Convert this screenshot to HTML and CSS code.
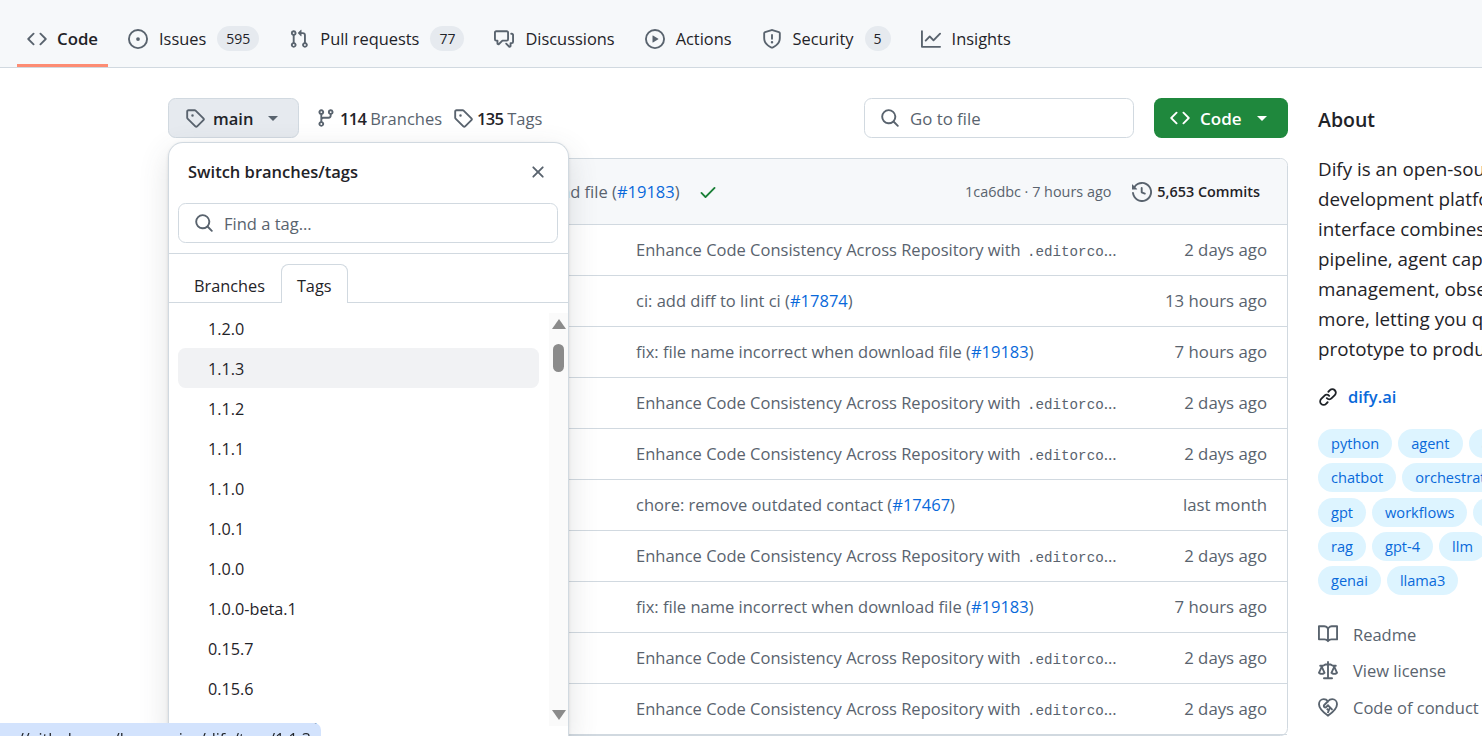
FILE: index.html
```html
<!DOCTYPE html>
<html lang="en">
<head>
  <meta charset="UTF-8">
  <title>dify</title>
  <link rel="stylesheet" href="styles.css">
</head>
<body>
  <nav class="repo-nav">
    <a class="tab active"><svg class="icon" viewBox="0 0 16 16"><path d="m11.28 3.22 4.25 4.25a.75.75 0 0 1 0 1.06l-4.25 4.25a.749.749 0 0 1-1.275-.326.749.749 0 0 1 .215-.734L13.94 8l-3.72-3.72a.749.749 0 0 1 .326-1.275.749.749 0 0 1 .734.215Zm-6.56 0a.751.751 0 0 1 1.042.018.751.751 0 0 1 .018 1.042L2.06 8l3.72 3.72a.749.749 0 0 1-.326 1.275.749.749 0 0 1-.734-.215L.47 8.53a.75.75 0 0 1 0-1.06Z"/></svg>Code</a>
    <a class="tab"><svg class="icon" viewBox="0 0 16 16"><path d="M8 9.5a1.5 1.5 0 1 0 0-3 1.5 1.5 0 0 0 0 3Z"/><path d="M8 0a8 8 0 1 1 0 16A8 8 0 0 1 8 0ZM1.5 8a6.5 6.5 0 1 0 13 0 6.5 6.5 0 0 0-13 0Z"/></svg>Issues<span class="badge">595</span></a>
    <a class="tab"><svg class="icon" viewBox="0 0 16 16"><path d="M1.5 3.25a2.25 2.25 0 1 1 3 2.122v5.256a2.251 2.251 0 1 1-1.5 0V5.372A2.25 2.25 0 0 1 1.5 3.25Zm5.677-.177L9.573.677A.25.25 0 0 1 10 .854V2.5h1A2.5 2.5 0 0 1 13.5 5v5.628a2.251 2.251 0 1 1-1.5 0V5a1 1 0 0 0-1-1h-1v1.646a.25.25 0 0 1-.427.177L7.177 3.427a.25.25 0 0 1 0-.354ZM3.75 2.5a.75.75 0 1 0 0 1.5.75.75 0 0 0 0-1.5Zm0 9.5a.75.75 0 1 0 0 1.5.75.75 0 0 0 0-1.5Zm8.25.75a.75.75 0 1 0 1.5 0 .75.75 0 0 0-1.5 0Z"/></svg>Pull requests<span class="badge">77</span></a>
    <a class="tab"><svg class="icon" viewBox="0 0 16 16"><path d="M1.75 1h8.5c.966 0 1.75.784 1.75 1.75v5.5A1.75 1.75 0 0 1 10.25 10H7.061l-2.574 2.573A1.458 1.458 0 0 1 2 11.543V10h-.25A1.75 1.75 0 0 1 0 8.25v-5.5C0 1.784.784 1 1.75 1ZM1.5 2.75v5.5c0 .138.112.25.25.25h1a.75.75 0 0 1 .75.75v2.19l2.72-2.72a.749.749 0 0 1 .53-.22h3.5a.25.25 0 0 0 .25-.25v-5.5a.25.25 0 0 0-.25-.25h-8.5a.25.25 0 0 0-.25.25Zm13 2a.25.25 0 0 0-.25-.25h-.5a.75.75 0 0 1 0-1.5h.5c.966 0 1.75.784 1.75 1.75v5.5A1.75 1.75 0 0 1 14.25 12H14v1.543a1.458 1.458 0 0 1-2.487 1.03L9.22 12.28a.749.749 0 0 1 .326-1.275.749.749 0 0 1 .734.215l2.22 2.22v-2.19a.75.75 0 0 1 .75-.75h1a.25.25 0 0 0 .25-.25Z"/></svg>Discussions</a>
    <a class="tab"><svg class="icon" viewBox="0 0 16 16"><path d="M8 0a8 8 0 1 1 0 16A8 8 0 0 1 8 0ZM1.5 8a6.5 6.5 0 1 0 13 0 6.5 6.5 0 0 0-13 0Zm4.879-2.773 4.264 2.559a.25.25 0 0 1 0 .428l-4.264 2.559A.25.25 0 0 1 6 10.559V5.442a.25.25 0 0 1 .379-.215Z"/></svg>Actions</a>
    <a class="tab"><svg class="icon" viewBox="0 0 16 16"><path d="M7.467.133a1.748 1.748 0 0 1 1.066 0l5.25 1.68A1.75 1.75 0 0 1 15 3.48V7c0 1.566-.32 3.182-1.303 4.682-.983 1.498-2.585 2.813-5.032 3.855a1.697 1.697 0 0 1-1.33 0c-2.447-1.042-4.049-2.357-5.032-3.855C1.32 10.182 1 8.566 1 7V3.48a1.75 1.75 0 0 1 1.217-1.667Zm.61 1.429a.25.25 0 0 0-.153 0l-5.25 1.68a.25.25 0 0 0-.174.238V7c0 1.358.275 2.666 1.057 3.86.784 1.194 2.121 2.34 4.366 3.297a.196.196 0 0 0 .154 0c2.245-.956 3.582-2.104 4.366-3.298C13.225 9.666 13.5 8.36 13.5 7V3.48a.251.251 0 0 0-.174-.237l-5.25-1.68ZM8.75 4.75v3a.75.75 0 0 1-1.5 0v-3a.75.75 0 0 1 1.5 0ZM9 10.5a1 1 0 1 1-2 0 1 1 0 0 1 2 0Z"/></svg>Security<span class="badge">5</span></a>
    <a class="tab"><svg class="icon" viewBox="0 0 16 16"><path d="M1.5 1.75V13.5h13.75a.75.75 0 0 1 0 1.5H.75a.75.75 0 0 1-.75-.75V1.75a.75.75 0 0 1 1.5 0Zm14.28 2.53-5.25 5.25a.75.75 0 0 1-1.06 0L7 7.06 4.28 9.78a.751.751 0 0 1-1.042-.018.751.751 0 0 1-.018-1.042l3.25-3.25a.75.75 0 0 1 1.06 0L10 7.94l4.72-4.72a.751.751 0 0 1 1.042.018.751.751 0 0 1 .018 1.042Z"/></svg>Insights</a>
  </nav>

  <main class="repo-main">
    <section class="files">
      <div class="toolbar">
        <div class="branch-select">
          <button class="btn-branch"><svg class="icon" viewBox="0 0 16 16"><path d="M1 7.775V2.75C1 1.784 1.784 1 2.75 1h5.025c.464 0 .91.184 1.238.513l6.25 6.25a1.75 1.75 0 0 1 0 2.474l-5.026 5.026a1.75 1.75 0 0 1-2.474 0l-6.25-6.25A1.75 1.75 0 0 1 1 7.775Zm1.5 0c0 .066.026.13.073.177l6.25 6.25a.25.25 0 0 0 .354 0l5.025-5.025a.25.25 0 0 0 0-.354l-6.25-6.25a.25.25 0 0 0-.177-.073H2.75a.25.25 0 0 0-.25.25ZM6 5a1 1 0 1 1 0 2 1 1 0 0 1 0-2Z"/></svg><b>main</b><span class="caret"></span></button>

          <div class="popup">
            <div class="popup-head"><span>Switch branches/tags</span><svg class="icon" viewBox="0 0 16 16"><path d="M3.72 3.72a.75.75 0 0 1 1.06 0L8 6.94l3.22-3.22a.749.749 0 0 1 1.275.326.749.749 0 0 1-.215.734L9.06 8l3.22 3.22a.749.749 0 0 1-.326 1.275.749.749 0 0 1-.734-.215L8 9.06l-3.22 3.22a.751.751 0 0 1-1.042-.018.751.751 0 0 1-.018-1.042L6.94 8 3.72 4.78a.75.75 0 0 1 0-1.06Z"/></svg></div>
            <div class="popup-search">
              <div class="input"><svg class="icon" viewBox="0 0 16 16"><path d="M10.68 11.74a6 6 0 0 1-7.922-8.982 6 6 0 0 1 8.982 7.922l3.04 3.04a.749.749 0 0 1-.326 1.275.749.749 0 0 1-.734-.215ZM11.5 7a4.499 4.499 0 1 0-8.997 0A4.499 4.499 0 0 0 11.5 7Z"/></svg>Find a tag...</div>
            </div>
            <div class="popup-tabs">
              <span class="popup-tab">Branches</span>
              <span class="popup-tab current">Tags</span>
            </div>
            <div class="popup-body">
              <ul class="tag-list">
                <li>1.2.0</li>
                <li class="hover">1.1.3</li>
                <li>1.1.2</li>
                <li>1.1.1</li>
                <li>1.1.0</li>
                <li>1.0.1</li>
                <li>1.0.0</li>
                <li>1.0.0-beta.1</li>
                <li>0.15.7</li>
                <li>0.15.6</li>
                <li>0.15.6-debug.1</li>
              </ul>
              <div class="scroll-track">
                <span class="arrow-up"></span>
                <span class="thumb"></span>
                <span class="arrow-down"></span>
              </div>
            </div>
          </div>
        </div>

        <span class="count"><svg class="icon" viewBox="0 0 16 16"><path d="M9.5 3.25a2.25 2.25 0 1 1 3 2.122V6A2.5 2.5 0 0 1 10 8.5H6a1 1 0 0 0-1 1v1.128a2.251 2.251 0 1 1-1.5 0V5.372a2.25 2.25 0 1 1 1.5 0v1.836A2.493 2.493 0 0 1 6 7h4a1 1 0 0 0 1-1v-.628A2.25 2.25 0 0 1 9.5 3.25Zm-6 0a.75.75 0 1 0 1.5 0 .75.75 0 0 0-1.5 0Zm8.25-.75a.75.75 0 1 0 0 1.5.75.75 0 0 0 0-1.5ZM4.25 12a.75.75 0 1 0 0 1.5.75.75 0 0 0 0-1.5Z"/></svg><b>114</b>Branches</span>
        <span class="count"><svg class="icon" viewBox="0 0 16 16"><path d="M1 7.775V2.75C1 1.784 1.784 1 2.75 1h5.025c.464 0 .91.184 1.238.513l6.25 6.25a1.75 1.75 0 0 1 0 2.474l-5.026 5.026a1.75 1.75 0 0 1-2.474 0l-6.25-6.25A1.75 1.75 0 0 1 1 7.775Zm1.5 0c0 .066.026.13.073.177l6.25 6.25a.25.25 0 0 0 .354 0l5.025-5.025a.25.25 0 0 0 0-.354l-6.25-6.25a.25.25 0 0 0-.177-.073H2.75a.25.25 0 0 0-.25.25ZM6 5a1 1 0 1 1 0 2 1 1 0 0 1 0-2Z"/></svg><b>135</b>Tags</span>

        <div class="toolbar-right">
          <div class="input go-file"><svg class="icon" viewBox="0 0 16 16"><path d="M10.68 11.74a6 6 0 0 1-7.922-8.982 6 6 0 0 1 8.982 7.922l3.04 3.04a.749.749 0 0 1-.326 1.275.749.749 0 0 1-.734-.215ZM11.5 7a4.499 4.499 0 1 0-8.997 0A4.499 4.499 0 0 0 11.5 7Z"/></svg>Go to file</div>
          <button class="btn-code"><svg class="icon" viewBox="0 0 16 16"><path d="m11.28 3.22 4.25 4.25a.75.75 0 0 1 0 1.06l-4.25 4.25a.749.749 0 0 1-1.275-.326.749.749 0 0 1 .215-.734L13.94 8l-3.72-3.72a.749.749 0 0 1 .326-1.275.749.749 0 0 1 .734.215Zm-6.56 0a.751.751 0 0 1 1.042.018.751.751 0 0 1 .018 1.042L2.06 8l3.72 3.72a.749.749 0 0 1-.326 1.275.749.749 0 0 1-.734-.215L.47 8.53a.75.75 0 0 1 0-1.06Z"/></svg><b>Code</b><span class="caret"></span></button>
        </div>
      </div>

      <div class="file-table">
        <div class="commit-head">
          <span class="commit-msg">fix: file name incorrect when download file (<a>#19183</a>)</span>
          <svg class="icon check" viewBox="0 0 16 16"><path d="M13.78 4.22a.75.75 0 0 1 0 1.06l-7.25 7.25a.75.75 0 0 1-1.06 0L2.22 9.28a.751.751 0 0 1 .018-1.042.751.751 0 0 1 1.042-.018L6 10.94l6.72-6.72a.75.75 0 0 1 1.06 0Z"/></svg>
          <span class="commit-meta">1ca6dbc · 7 hours ago</span>
          <span class="commit-count"><svg class="icon" viewBox="0 0 16 16"><path d="m.427 1.927 1.215 1.215a8.002 8.002 0 1 1-1.6 5.685.75.75 0 1 1 1.493-.154 6.5 6.5 0 1 0 1.18-4.458l1.358 1.358A.25.25 0 0 1 3.896 6H.25A.25.25 0 0 1 0 5.75V2.104a.25.25 0 0 1 .427-.177ZM7.75 4a.75.75 0 0 1 .75.75v2.992l2.028.812a.75.75 0 0 1-.557 1.392l-2.5-1A.751.751 0 0 1 7 8.25v-3.5A.75.75 0 0 1 7.75 4Z"/></svg>5,653 Commits</span>
        </div>
        <div class="row"><span class="msg">Enhance Code Consistency Across Repository with <code>.editorco</code>...</span><span class="age">2 days ago</span></div>
        <div class="row"><span class="msg">ci: add diff to lint ci (<a>#17874</a>)</span><span class="age">13 hours ago</span></div>
        <div class="row"><span class="msg">fix: file name incorrect when download file (<a>#19183</a>)</span><span class="age">7 hours ago</span></div>
        <div class="row"><span class="msg">Enhance Code Consistency Across Repository with <code>.editorco</code>...</span><span class="age">2 days ago</span></div>
        <div class="row"><span class="msg">Enhance Code Consistency Across Repository with <code>.editorco</code>...</span><span class="age">2 days ago</span></div>
        <div class="row"><span class="msg">chore: remove outdated contact (<a>#17467</a>)</span><span class="age">last month</span></div>
        <div class="row"><span class="msg">Enhance Code Consistency Across Repository with <code>.editorco</code>...</span><span class="age">2 days ago</span></div>
        <div class="row"><span class="msg">fix: file name incorrect when download file (<a>#19183</a>)</span><span class="age">7 hours ago</span></div>
        <div class="row"><span class="msg">Enhance Code Consistency Across Repository with <code>.editorco</code>...</span><span class="age">2 days ago</span></div>
        <div class="row"><span class="msg">Enhance Code Consistency Across Repository with <code>.editorco</code>...</span><span class="age">2 days ago</span></div>
      </div>
    </section>

    <aside class="about">
      <h2>About</h2>
      <p class="desc">Dify is an open-source LLM app<br>development platform. Dify's intuitive<br>interface combines AI workflow, RAG<br>pipeline, agent capabilities, model<br>management, observability features and<br>more, letting you quickly go from<br>prototype to production.</p>
      <a class="site"><svg class="icon" viewBox="0 0 16 16"><path d="m7.775 3.275 1.25-1.25a3.5 3.5 0 1 1 4.95 4.95l-2.5 2.5a3.5 3.5 0 0 1-4.95 0 .751.751 0 0 1 .018-1.042.751.751 0 0 1 1.042-.018 1.998 1.998 0 0 0 2.83 0l2.5-2.5a2.002 2.002 0 0 0-2.83-2.83l-1.25 1.25a.751.751 0 0 1-1.042-.018.751.751 0 0 1-.018-1.042Zm-4.69 9.64a1.998 1.998 0 0 0 2.83 0l1.25-1.25a.751.751 0 0 1 1.042.018.751.751 0 0 1 .018 1.042l-1.25 1.25a3.5 3.5 0 1 1-4.95-4.95l2.5-2.5a3.5 3.5 0 0 1 4.95 0 .751.751 0 0 1-.018 1.042.751.751 0 0 1-1.042.018 1.998 1.998 0 0 0-2.83 0l-2.5 2.5a1.998 1.998 0 0 0 0 2.83Z"/></svg>dify.ai</a>
      <div class="topics">
        <div class="topic-row"><span class="topic">python</span><span class="topic">agent</span><span class="topic">ai</span></div>
        <div class="topic-row"><span class="topic">chatbot</span><span class="topic">orchestration</span></div>
        <div class="topic-row"><span class="topic">gpt</span><span class="topic">workflows</span><span class="topic">openai</span></div>
        <div class="topic-row"><span class="topic">rag</span><span class="topic">gpt-4</span><span class="topic">llm</span></div>
        <div class="topic-row"><span class="topic">genai</span><span class="topic">llama3</span></div>
      </div>
      <ul class="side-links">
        <li><svg class="icon" viewBox="0 0 16 16"><path d="M0 1.75A.75.75 0 0 1 .75 1h4.253c1.227 0 2.317.59 3 1.501A3.743 3.743 0 0 1 11.006 1h4.245a.75.75 0 0 1 .75.75v10.5a.75.75 0 0 1-.75.75h-4.507a2.25 2.25 0 0 0-1.591.659l-.622.621a.75.75 0 0 1-1.06 0l-.622-.621A2.25 2.25 0 0 0 5.258 13H.75a.75.75 0 0 1-.75-.75Zm7.251 10.324.004-5.073-.002-2.253A2.25 2.25 0 0 0 5.003 2.5H1.5v9h3.757a3.75 3.75 0 0 1 1.994.574ZM8.755 4.75l-.004 7.322a3.752 3.752 0 0 1 1.992-.572H14.5v-9h-3.495a2.25 2.25 0 0 0-2.25 2.25Z"/></svg>Readme</li>
        <li><svg class="icon" viewBox="0 0 16 16"><path d="M8.75.75V2h.985c.304 0 .603.08.867.231l1.29.736c.038.022.08.033.124.033h2.234a.75.75 0 0 1 0 1.5h-.427l2.111 4.692a.75.75 0 0 1-.154.838l-.53-.53.529.531-.001.002-.002.002-.006.006-.006.005-.01.01-.045.04c-.21.176-.441.327-.686.45C14.556 10.78 13.88 11 13 11a4.498 4.498 0 0 1-2.023-.454 3.544 3.544 0 0 1-.686-.45l-.045-.04-.016-.015-.006-.006-.004-.004v-.001a.75.75 0 0 1-.154-.838L12.178 4.5h-.162c-.305 0-.604-.079-.868-.231l-1.29-.736a.245.245 0 0 0-.124-.033H8.75V13h2.5a.75.75 0 0 1 0 1.5h-6.5a.75.75 0 0 1 0-1.5h2.5V3.5h-.984a.245.245 0 0 0-.124.033l-1.289.737c-.265.15-.564.23-.869.23h-.162l2.112 4.692a.75.75 0 0 1-.154.838l-.53-.53.529.531-.001.002-.002.002-.006.006-.016.015-.045.04c-.21.176-.441.327-.686.45C4.556 10.78 3.88 11 3 11a4.498 4.498 0 0 1-2.023-.454 3.544 3.544 0 0 1-.686-.45l-.045-.04-.016-.015-.006-.006-.004-.004v-.001a.75.75 0 0 1-.154-.838L2.178 4.5H1.75a.75.75 0 0 1 0-1.5h2.234a.249.249 0 0 0 .125-.033l1.288-.737c.265-.15.564-.23.869-.23h.984V.75a.75.75 0 0 1 1.5 0Zm2.945 8.477c.285.135.718.273 1.305.273s1.02-.138 1.305-.273L13 6.327Zm-10 0c.285.135.718.273 1.305.273s1.02-.138 1.305-.273L3 6.327Z"/></svg>View license</li>
        <li><svg class="icon heart" viewBox="0 0 16 16"><path d="M8 14.9C5.4 13 .8 9.7.8 5.7.8 3.4 2.5 1.7 4.6 1.7c1.4 0 2.5.6 3.4 1.7.9-1.1 2-1.7 3.4-1.7 2.1 0 3.8 1.7 3.8 4 0 4-4.6 7.3-7.2 9.2Z"/><path d="M8 3.4 5 6.4c-.5.5-.5 1.2 0 1.6.5.5 1.2.4 1.6 0L8 6.7l3.6 3.6M9.6 8.4l-1.8 4.4M8.6 10.9 7 9.3"/></svg>Code of conduct</li>
      </ul>
    </aside>
  </main>

  <div class="status-url">https://github.com/langgenius/dify/tree/1.1.3</div>
</body>
</html>
```

FILE: styles.css
```css
* {
  box-sizing: border-box;
}

body {
  margin: 0;
  height: 736px;
  overflow: hidden;
  background-color: #fff;
  color: #1f2328;
  font-family: "Open Sans", "Noto Sans", sans-serif;
  font-size: 16.5px;
}

a {
  color: #0969da;
}

b {
  font-weight: 600;
}

.icon {
  width: 20px;
  height: 20px;
  fill: #59636e;
  flex: none;
}

.caret {
  width: 0;
  height: 0;
  border-left: 5px solid transparent;
  border-right: 5px solid transparent;
  border-top: 5px solid #59636e;
}

/* top tabs */
.repo-nav {
  display: flex;
  gap: 10px;
  height: 68px;
  padding: 0 17px;
  background-color: #f6f8fa;
  border-bottom: 1px solid #d1d9e0;
  font-size: 16.4px;
}

.tab {
  display: flex;
  align-items: center;
  gap: 11px;
  height: 67px;
  padding: 13px 10px 0;
  color: #1f2328;
  white-space: nowrap;
  border-bottom: 3px solid transparent;
}

.tab.active {
  gap: 10px;
  font-size: 16.8px;
  font-weight: 600;
  border-bottom-color: #fd8c73;
}

.badge {
  min-width: 25px;
  height: 25px;
  padding: 0 9px;
  border-radius: 13px;
  background-color: #e6eaef;
  font-size: 14px;
  font-weight: 500;
  line-height: 25px;
  text-align: center;
}

/* page columns */
.repo-main {
  display: grid;
  grid-template-columns: 1120px 370px;
  gap: 30px;
  padding: 30px 0 0 168px;
}

.toolbar {
  display: flex;
  align-items: center;
  height: 40px;
  margin-bottom: 20px;
}

.branch-select {
  position: relative;
  margin-right: 17px;
}

.btn-branch {
  display: flex;
  align-items: center;
  width: 131px;
  height: 40px;
  padding: 0 16px;
  gap: 8px;
  background-color: #e6eaef;
  border: 1px solid #d1d9e0;
  border-radius: 7.5px;
  color: #1f2328;
  font: inherit;
}

.btn-branch .caret {
  margin-left: 7px;
}

.count {
  display: flex;
  align-items: center;
  gap: 4px;
  margin-right: 11px;
  color: #59636e;
  white-space: nowrap;
}

.count b {
  color: #1f2328;
  letter-spacing: -.7px;
}

.toolbar-right {
  display: flex;
  gap: 20px;
  margin-left: auto;
}

.input {
  display: flex;
  align-items: center;
  gap: 10px;
  height: 40px;
  padding: 0 15px;
  background-color: #fff;
  border: 1px solid #d1d9e0;
  border-radius: 7.5px;
  color: #59636e;
}

.go-file {
  width: 270px;
  font-size: 16.8px;
}

.btn-code {
  display: flex;
  align-items: center;
  width: 134px;
  height: 40px;
  gap: 10px;
  padding: 0 16px;
  background-color: #1f883d;
  border: 0;
  border-radius: 7.5px;
  color: #fff;
  font: inherit;
  font-size: 17px;
}

.btn-code .icon {
  fill: #fff;
}

.btn-code .caret {
  margin-left: 5px;
  border-top-color: #fff;
}

/* tag dropdown */
.popup {
  position: absolute;
  top: 44px;
  left: 0;
  z-index: 5;
  width: 401px;
  height: 594px;
  overflow: hidden;
  background-color: #fff;
  border: 1px solid #d1d9e0;
  border-bottom: 0;
  border-radius: 15px 15px 0 0;
  box-shadow: 0 1px 3px rgba(31, 35, 40, .12), 0 10px 30px rgba(66, 74, 83, .16);
}

.popup-head {
  display: flex;
  align-items: center;
  justify-content: space-between;
  height: 60px;
  padding: 0 20px 3px 19px;
  font-weight: 600;
}

.popup-search {
  padding: 0 10px 10px 9px;
  border-bottom: 1px solid #d1d9e0;
}

.popup-tabs {
  display: flex;
  align-items: flex-end;
  height: 49px;
  padding: 0 9px;
  border-bottom: 1px solid #d1d9e0;
  font-size: 16.3px;
}

.popup-tab {
  height: 39px;
  padding: 0 15px;
  margin-bottom: -1px;
  font-weight: 500;
  line-height: 42px;
  border: 1px solid transparent;
  border-bottom: 0;
  border-radius: 7.5px 7.5px 0 0;
}

.popup-tab.current {
  background-color: #fff;
  border-color: #d1d9e0;
}

.popup-body {
  display: flex;
  justify-content: space-between;
}

.tag-list {
  width: 370px;
  margin: 0;
  padding: 5px 0 0 9px;
  list-style: none;
  font-size: 16.2px;
}

.tag-list li {
  height: 40px;
  padding-left: 30px;
  border-radius: 7.5px;
  line-height: 42px;
}

.tag-list li.hover {
  background-color: #f1f2f4;
}

.scroll-track {
  display: flex;
  flex-direction: column;
  align-items: center;
  flex: none;
  width: 19px;
  height: 413px;
  margin-top: 10px;
  padding: 6px 0;
  background-color: #fafafa;
}

.arrow-up, .arrow-down {
  width: 0;
  height: 0;
  border-left: 7px solid transparent;
  border-right: 7px solid transparent;
}

.arrow-up {
  border-bottom: 10px solid #8b8b8b;
}

.arrow-down {
  margin-top: auto;
  border-top: 10px solid #8b8b8b;
}

.thumb {
  width: 11px;
  height: 28px;
  margin-top: 15px;
  border-radius: 6px;
  background-color: #8b8b8b;
}

/* file table */
.file-table {
  border: 1px solid #d1d9e0;
  border-radius: 7.5px;
}

.commit-head {
  display: flex;
  align-items: center;
  height: 66px;
  padding: 0 27px 0 113px;
  background-color: #f6f8fa;
  border-bottom: 1px solid #d1d9e0;
  border-radius: 7.5px 7.5px 0 0;
  color: #59636e;
}

.commit-head .check {
  width: 20px;
  margin-left: 18px;
  fill: #1a7f37;
}

.commit-meta {
  margin-left: auto;
  font-size: 14.4px;
}

.commit-count {
  display: flex;
  align-items: center;
  gap: 5px;
  margin-left: 21px;
  color: #1f2328;
  font-size: 14.4px;
  font-weight: 600;
}

.row {
  display: flex;
  align-items: center;
  justify-content: space-between;
  height: 51px;
  padding: 0 20px 2px 467px;
  border-bottom: 1px solid #d1d9e0;
  color: #59636e;
}

.row code {
  margin-left: 2px;
  font-family: "Liberation Mono", monospace;
  font-size: 14.2px;
}

.age {
  font-size: 16.8px;
}

/* sidebar */
.about h2 {
  margin: 8px 0 21px;
  font-size: 19.5px;
  font-weight: 600;
}

.desc {
  margin: 0 0 21px;
  font-size: 18.8px;
  line-height: 30px;
  white-space: nowrap;
}

.site {
  display: flex;
  align-items: center;
  gap: 10px;
  font-weight: 600;
}

.site .icon {
  fill: #1f2328;
}

.topics {
  display: flex;
  flex-direction: column;
  gap: 5.3px;
  margin: 21px 0;
}

.topic-row {
  display: flex;
  gap: 6px;
}

.topic {
  height: 29px;
  padding: 0 13px;
  border-radius: 15px;
  background-color: #ddf4ff;
  color: #0969da;
  font-size: 14.6px;
  font-weight: 500;
  line-height: 29px;
  white-space: nowrap;
}

.side-links {
  margin: 0;
  padding: 0;
  list-style: none;
  color: #59636e;
}

.side-links li {
  display: flex;
  align-items: center;
  gap: 15px;
  height: 36.5px;
  white-space: nowrap;
}

.heart path {
  fill: none;
  stroke: #59636e;
  stroke-width: 1.5;
}

/* link preview at the window corner */
.status-url {
  position: fixed;
  left: 0;
  bottom: 0;
  z-index: 9;
  display: flex;
  justify-content: flex-end;
  width: 321px;
  height: 13px;
  padding-right: 10px;
  overflow: hidden;
  background-color: #d3e3fd;
  border-top-right-radius: 7px;
  color: #1f2328;
  font-size: 16px;
  line-height: 33px;
  white-space: nowrap;
}
```
